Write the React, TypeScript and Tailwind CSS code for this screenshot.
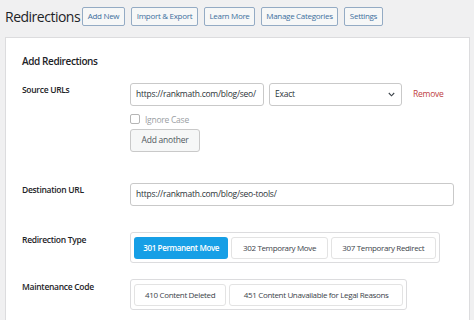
import React from "react";

const font = { fontFamily: '"Open Sans", "Noto Sans", sans-serif' };

function TopBtn({ children, w }: { children: React.ReactNode; w: string }) {
  return (
    <div
      className={
        w +
        " h-[19px] flex items-center justify-center border border-[#94abc4] rounded-[2px] bg-[#f6f7f7] text-[8px] tracking-[-0.3px] text-[#40709e] whitespace-nowrap"
      }
    >
      {children}
    </div>
  );
}

function Seg({ children, active }: { children: React.ReactNode; active?: boolean }) {
  return (
    <div
      className={
        "h-[22px] flex items-center justify-center rounded-[3px] text-[8px] tracking-[-0.35px] whitespace-nowrap " +
        (active
          ? "bg-[#169fe6] text-white font-semibold"
          : "bg-white border border-[#e3e3e3] text-[#3c434a]")
      }
    >
      {children}
    </div>
  );
}

export default function App() {
  return (
    <div className="w-[474px] h-[320px] bg-[#f0f0f1] overflow-hidden text-[#1d2327]" style={font}>
      <div className="flex items-center h-[31px] pl-[5px] pt-[1px]">
        <div className="w-[77px] text-[14px] tracking-[-0.5px] text-[#1d2327]">Redirections</div>
        <div className="flex gap-[6px]">
          <TopBtn w="w-[43px]">Add New</TopBtn>
          <TopBtn w="w-[67px]">Import &amp; Export</TopBtn>
          <TopBtn w="w-[51px]">Learn More</TopBtn>
          <TopBtn w="w-[77px]">Manage Categories</TopBtn>
          <TopBtn w="w-[39px]">Settings</TopBtn>
        </div>
      </div>
      <div className="ml-[5px] mt-[6px] w-[465px] h-[300px] bg-white border border-[#dcdcde] pl-[16px] pt-[15px]">
        <div className="text-[10px] tracking-[-0.4px] font-semibold leading-[16px]">Add Redirections</div>

        <div className="flex mt-[14px]">
          <div className="w-[108px] text-[8.5px] tracking-[-0.3px] font-semibold pt-[1px] leading-[12px]">Source URLs</div>
          <div className="flex flex-col">
            <div className="flex items-center">
              <div className="w-[134px] h-[23px] border border-[#c9c9c9] rounded-[3px] flex items-center px-[5px] text-[8.5px] tracking-[-0.25px] text-[#2c3338] whitespace-nowrap">
                https://rankmath.com/blog/seo/
              </div>
              <div className="ml-[5px] w-[133px] h-[23px] border border-[#c9c9c9] rounded-[3px] flex items-center justify-between pl-[5px] pr-[6px] text-[8.5px] tracking-[-0.25px] text-[#2c3338]">
                <span>Exact</span>
                <svg width="7" height="5" viewBox="0 0 7 5">
                  <path d="M0.8 1 L3.5 3.8 L6.2 1" stroke="#3c434a" strokeWidth="1.1" fill="none" />
                </svg>
              </div>
              <div className="ml-[11px] text-[8.5px] tracking-[-0.25px] text-[#c0413f]">Remove</div>
            </div>
            <div className="flex items-center mt-[8px] h-[10px]">
              <div className="w-[10px] h-[10px] border border-[#b5b5b5] rounded-[2px] bg-white" />
              <div className="ml-[5px] pt-[2px] text-[8.5px] tracking-[-0.25px] leading-none text-[#9a9ea3]">Ignore Case</div>
            </div>
            <div className="mt-[5px] w-[70px] h-[23px] border border-[#c9c9c9] rounded-[3px] bg-[#f6f7f7] flex items-center justify-center text-[8.5px] tracking-[-0.25px] text-[#50575e]">
              Add another
            </div>
          </div>
        </div>

        <div className="flex mt-[31px]">
          <div className="w-[108px] text-[8.5px] tracking-[-0.3px] font-semibold pt-[1px] leading-[12px]">Destination URL</div>
          <div className="w-[324px] h-[23px] border border-[#c9c9c9] rounded-[3px] flex items-center px-[5px] text-[8.5px] tracking-[-0.25px] text-[#2c3338]">
            https://rankmath.com/blog/seo-tools/
          </div>
        </div>

        <div className="flex mt-[26px]">
          <div className="w-[108px] text-[8.5px] tracking-[-0.3px] font-semibold pt-[2px] leading-[12px]">Redirection Type</div>
          <div className="w-[310px] h-[31px] border border-[#dcdcde] rounded-[3px] flex items-center gap-[3px] px-[3px]">
            <div className="w-[95px]"><Seg active>301 Permanent Move</Seg></div>
            <div className="w-[97px]"><Seg>302 Temporary Move</Seg></div>
            <div className="w-[106px]"><Seg>307 Temporary Redirect</Seg></div>
          </div>
        </div>

        <div className="flex mt-[16px]">
          <div className="w-[108px] text-[8.5px] tracking-[-0.3px] font-semibold pt-[2px] leading-[12px]">Maintenance Code</div>
          <div className="w-[277px] h-[31px] border border-[#dcdcde] rounded-[3px] flex items-center gap-[3px] px-[3px]">
            <div className="w-[93px]"><Seg>410 Content Deleted</Seg></div>
            <div className="w-[175px]"><Seg>451 Content Unavailable for Legal Reasons</Seg></div>
          </div>
        </div>
      </div>
    </div>
  );
}
